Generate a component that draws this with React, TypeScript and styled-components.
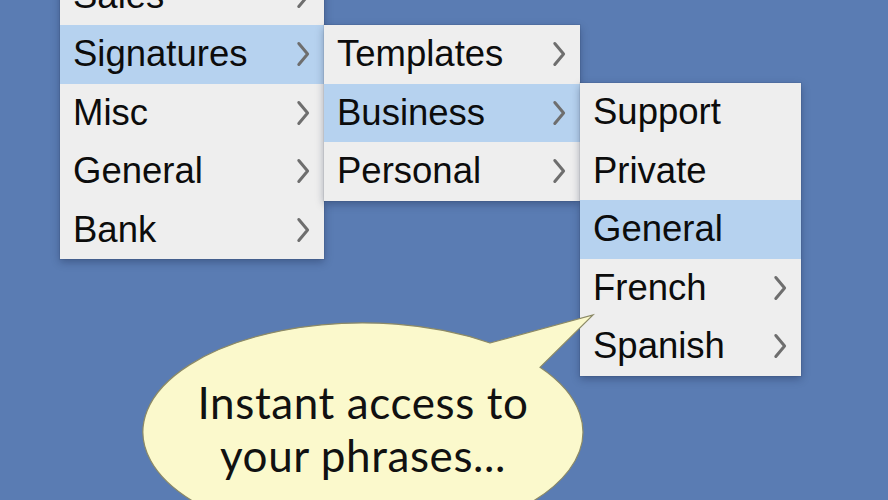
import React from "react";
import styled, { createGlobalStyle } from "styled-components";

const Global = createGlobalStyle`
  html, body {
    margin: 0;
    padding: 0;
    background: #5a7cb3;
  }
  #root {
    width: 888px;
    height: 500px;
  }
`;

const Desktop = styled.div`
  position: relative;
  width: 888px;
  height: 500px;
  overflow: hidden;
  background: #5a7cb3;
  font-family: "Liberation Sans", Arial, Helvetica, sans-serif;
`;

const Cascade = styled.div`
  display: flex;
  align-items: flex-start;
  padding-left: 60px;
`;

const Menu = styled.ul<{ $top: number; $width: number }>`
  list-style: none;
  margin: ${(p) => p.$top}px 0 0;
  padding: 0;
  flex-shrink: 0;
  width: ${(p) => p.$width}px;
  background: #eeeeee;
  box-shadow: 0 3px 8px rgba(16, 28, 60, 0.35), 0 0 0 1px rgba(0, 0, 0, 0.06);
`;

const Item = styled.li<{ $active?: boolean }>`
  box-sizing: border-box;
  height: 58.5px;
  display: flex;
  align-items: center;
  justify-content: space-between;
  padding: 0 14px 0 13px;
  background: ${(p) => (p.$active ? "#b6d2ef" : "transparent")};
  color: #0c0c0c;
  font-size: 36.5px;
  white-space: nowrap;
`;

const Chevron = () => (
  <svg width="14" height="26" viewBox="0 0 14 26" aria-hidden="true">
    <path
      d="M2.8 2.5 L11.6 13 L2.8 23.5"
      fill="none"
      stroke="#6e6e6e"
      strokeWidth="3"
      strokeLinecap="round"
      strokeLinejoin="round"
    />
  </svg>
);

const Callout = styled.div`
  position: absolute;
  left: 140px;
  top: 310px;
  width: 460px;
  height: 200px;
`;

const BubbleShape = styled.svg`
  position: absolute;
  left: 0;
  top: 0;
  overflow: visible;
`;

const Caption = styled.p`
  position: relative;
  margin: 0;
  padding-top: 66px;
  width: 446px;
  text-align: center;
  font-family: Lato, "Open Sans", sans-serif;
  font-size: 44px;
  letter-spacing: 0.6px;
  line-height: 53px;
  color: #111111;
`;

type Entry = { label: string; sub?: boolean; active?: boolean };

const categories: Entry[] = [
  { label: "Sales", sub: true },
  { label: "Signatures", sub: true, active: true },
  { label: "Misc", sub: true },
  { label: "General", sub: true },
  { label: "Bank", sub: true },
];

const signatureGroups: Entry[] = [
  { label: "Templates", sub: true },
  { label: "Business", sub: true, active: true },
  { label: "Personal", sub: true },
];

const businessPhrases: Entry[] = [
  { label: "Support" },
  { label: "Private" },
  { label: "General", active: true },
  { label: "French", sub: true },
  { label: "Spanish", sub: true },
];

const MenuList = ({ items, top, width }: { items: Entry[]; top: number; width: number }) => (
  <Menu $top={top} $width={width}>
    {items.map((it) => (
      <Item key={it.label} $active={it.active}>
        <span>{it.label}</span>
        {it.sub && <Chevron />}
      </Item>
    ))}
  </Menu>
);

export default function App() {
  return (
    <>
      <Global />
      <Desktop>
        <Cascade>
          <MenuList items={categories} top={-33.5} width={264} />
          <MenuList items={signatureGroups} top={25} width={256} />
          <MenuList items={businessPhrases} top={83} width={221} />
        </Cascade>
        <Callout>
          <BubbleShape width="460" height="200" viewBox="0 0 460 200">
            <path
              d="M350 33 L453 5 L400 57.3 A220 109 0 1 1 350 33 Z"
              fill="#fbf9cc"
              stroke="#8c8a66"
              strokeWidth="1.2"
              strokeLinejoin="miter"
            />
          </BubbleShape>
          <Caption>
            Instant access to
            <br />
            your phrases...
          </Caption>
        </Callout>
      </Desktop>
    </>
  );
}
